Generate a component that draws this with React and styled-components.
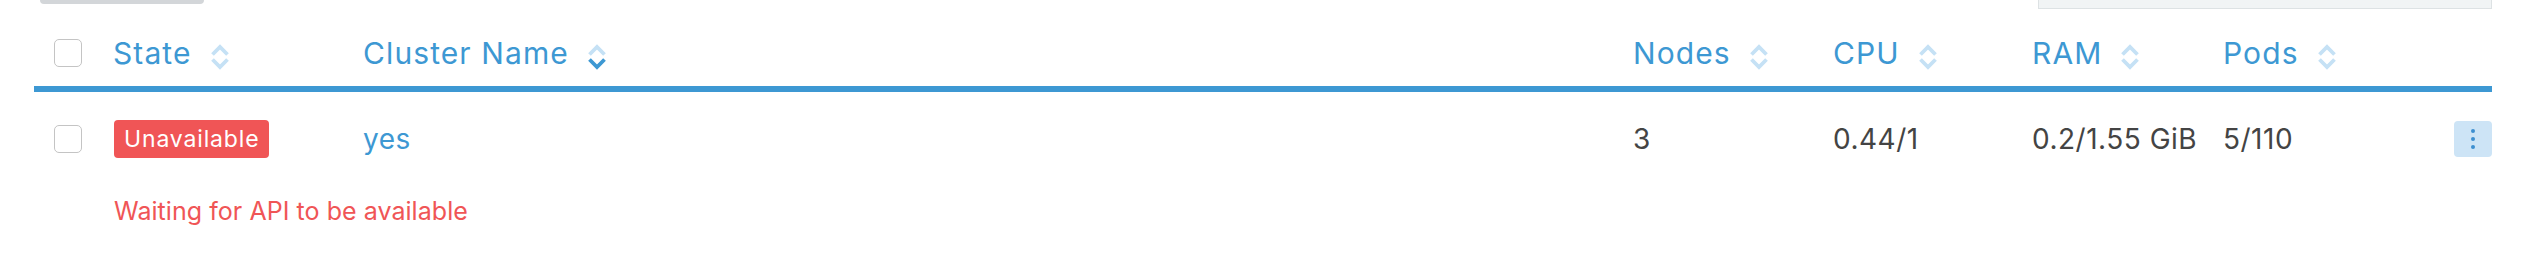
import React from "react";
import styled, { createGlobalStyle } from "styled-components";

const Global = createGlobalStyle`
  html, body { margin: 0; padding: 0; background: #fff; }
  body { font-family: Inter, "Open Sans", sans-serif; width: 2536px; }
`;

const Page = styled.div`
  width: 2536px;
  height: 256px;
  overflow: hidden;
  background: #fff;
`;

const TopBar = styled.div`
  display: flex;
  justify-content: space-between;
  align-items: flex-start;
  height: 10px;
  padding: 0 44px 0 40px;
`;

const GrayTab = styled.div`
  width: 164px;
  height: 4px;
  background: #d3d6d9;
  border-radius: 0 0 5px 5px;
`;

const SearchBox = styled.div`
  width: 452px;
  height: 8px;
  background: #f1f4f5;
  border: 1px solid #dde2e4;
  border-top: none;
`;

const Table = styled.div`
  margin: 0 44px 0 34px;
`;

const cols = "79px 250px 1fr 200px 199px 191px 200px 69px";

const HeadRow = styled.div`
  display: grid;
  grid-template-columns: ${cols};
  align-items: center;
  height: 66px;
  padding-top: 10px;
  border-bottom: 6px solid #3d98d3;
`;

const BodyRow = styled.div`
  display: grid;
  grid-template-columns: ${cols};
  align-items: center;
  height: 94px;
`;

const Cell = styled.div`
  display: flex;
  align-items: center;
  justify-content: ${(p) => (p.$end ? "flex-end" : "flex-start")};
  padding-left: ${(p) => (p.$box ? "20px" : "0")};
  font-size: 28px;
  color: #444;
`;

const HeadLabel = styled.div`
  display: flex;
  align-items: center;
  gap: 18px;
  font-size: 30px;
  letter-spacing: 1.1px;
  color: #3d98d3;
  white-space: nowrap;
`;

const SortIcon = styled.svg`
  width: 20px;
  height: 30px;
  margin-top: 8px;
  flex: none;
`;

const Checkbox = styled.span`
  display: block;
  width: 26px;
  height: 26px;
  border: 1px solid #c4c4c4;
  border-radius: 5px;
  background: #fff;
`;

const Badge = styled.span`
  display: inline-flex;
  align-items: center;
  height: 38px;
  padding: 0 10px;
  margin-left: 1px;
  border-radius: 4px;
  background: #f05556;
  color: #fff;
  font-size: 23px;
  letter-spacing: 0.85px;
`;

const Link = styled.span`
  color: #3d98d3;
  font-size: 28px;
  letter-spacing: 0.5px;
`;

const Value = styled.span`
  color: #444;
  font-size: 28px;
  letter-spacing: 0.5px;
`;

const ActionButton = styled.button`
  display: flex;
  flex-direction: column;
  align-items: center;
  justify-content: center;
  gap: 3.5px;
  width: 38px;
  height: 36px;
  padding: 0;
  border: none;
  border-radius: 4px;
  background: #cde4f6;
`;

const Dot = styled.span`
  display: block;
  width: 4.5px;
  height: 4.5px;
  border-radius: 50%;
  background: #3d8fd0;
`;

const SubRow = styled.div`
  padding: 10px 0 0 80px;
  font-size: 25px;
  letter-spacing: 0.05px;
  color: #f05556;
`;

const Sort = ({ active }) => (
  <SortIcon viewBox="0 0 20 30">
    <polyline
      points="2.5,12.5 10,5 17.5,12.5"
      fill="none"
      stroke="#c5e1f5"
      strokeWidth="3.8"
    />
    <polyline
      points="2.5,17.5 10,25 17.5,17.5"
      fill="none"
      stroke={active ? "#3d98d3" : "#c5e1f5"}
      strokeWidth="3.8"
    />
  </SortIcon>
);

const headers = [
  { label: "State" },
  { label: "Cluster Name", active: true },
  { label: "Nodes" },
  { label: "CPU" },
  { label: "RAM" },
  { label: "Pods" },
];

export default function App() {
  return (
    <Page>
      <Global />
      <TopBar>
        <GrayTab />
        <SearchBox />
      </TopBar>
      <Table>
        <HeadRow>
          <Cell $box>
            <Checkbox />
          </Cell>
          {headers.map((h) => (
            <Cell key={h.label}>
              <HeadLabel>
                {h.label}
                <Sort active={h.active} />
              </HeadLabel>
            </Cell>
          ))}
          <Cell />
        </HeadRow>
        <BodyRow>
          <Cell $box>
            <Checkbox />
          </Cell>
          <Cell>
            <Badge>Unavailable</Badge>
          </Cell>
          <Cell>
            <Link>yes</Link>
          </Cell>
          <Cell>
            <Value>3</Value>
          </Cell>
          <Cell>
            <Value>0.44/1</Value>
          </Cell>
          <Cell>
            <Value>0.2/1.55 GiB</Value>
          </Cell>
          <Cell>
            <Value>5/110</Value>
          </Cell>
          <Cell $end>
            <ActionButton aria-label="actions">
              <Dot />
              <Dot />
              <Dot />
            </ActionButton>
          </Cell>
        </BodyRow>
        <SubRow>Waiting for API to be available</SubRow>
      </Table>
    </Page>
  );
}
